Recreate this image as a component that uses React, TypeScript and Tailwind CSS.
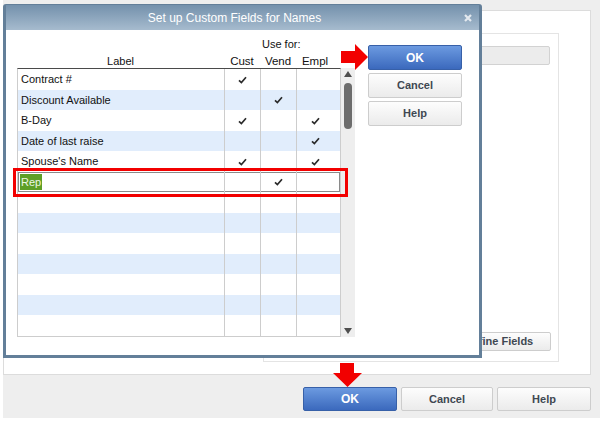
import React from "react";

type Row = { label: string; cust?: boolean; vend?: boolean; empl?: boolean; editing?: boolean };

const rows: Row[] = [
  { label: "Contract #", cust: true },
  { label: "Discount Available", vend: true },
  { label: "B-Day", cust: true, empl: true },
  { label: "Date of last raise", empl: true },
  { label: "Spouse's Name", cust: true, empl: true },
  { label: "Rep", vend: true, editing: true },
  { label: "" },
  { label: "" },
  { label: "" },
  { label: "" },
  { label: "" },
  { label: "" },
  { label: "" },
];

function Check() {
  return (
    <svg width="9" height="8" viewBox="0 0 9 8">
      <path d="M1 4.3 L3.4 6.6 L8 1.3" fill="none" stroke="#2a2a2a" strokeWidth="1.7" />
    </svg>
  );
}

function GrayButton({ label, className }: { label: string; className: string }) {
  return (
    <div
      className={`flex items-center justify-center rounded-[2px] border border-[#cdcdcd] bg-gradient-to-b from-[#fdfdfd] to-[#ebebeb] text-[11px] font-bold text-[#3f4852] ${className}`}
    >
      {label}
    </div>
  );
}

function BlueButton({ className }: { className: string }) {
  return (
    <div
      className={`flex items-center justify-center rounded-[2px] border border-[#3760a8] bg-gradient-to-b from-[#6c9ae0] to-[#3b69bd] text-[12px] font-bold text-white ${className}`}
    >
      OK
    </div>
  );
}

export default function App() {
  return (
    <div className="relative h-[431px] w-[606px] overflow-hidden bg-white font-['Liberation_Sans',Arial,sans-serif] text-[#111]">
      {/* window behind the dialog */}
      <div className="ml-[3px] flex h-[418px] w-[597px] flex-col bg-[#eeeeee] pt-[10px]">
        <div className="h-[365px] w-[588px] border border-[#dcdcdc] bg-white pl-[259px] pt-[22px]">
          <div className="flex h-[329px] w-[296px] flex-col border border-[#e4e4e4] bg-white">
            <div className="ml-auto mr-[8px] mt-[12px] h-[19px] w-[250px] rounded-[2px] border border-[#d2d2d2] bg-[#ececec]" />
            <div className="flex-1" />
            <GrayButton label="Define Fields" className="mb-[10px] ml-auto mr-[7px] h-[19px] w-[104px]" />
          </div>
        </div>
        <div className="flex justify-end gap-[4px] pr-[9px] pt-[12px]">
          <BlueButton className="h-[24px] w-[94px]" />
          <GrayButton label="Cancel" className="h-[24px] w-[92px]" />
          <GrayButton label="Help" className="h-[24px] w-[94px]" />
        </div>
      </div>

      {/* dialog */}
      <div className="absolute left-[3px] top-[4px] flex h-[354px] w-[479px] flex-col rounded-t-[3px] border-[3px] border-t-[1px] border-[#637f99] bg-white">
        <div className="relative flex h-[25px] items-center justify-center bg-gradient-to-b from-[#7491ac] to-[#a6bbce] pr-[16px] text-[12px] text-white">
          Set up Custom Fields for Names
          <svg className="absolute right-[7px] top-[9px]" width="8" height="8" viewBox="0 0 8 8">
            <path d="M1 1 L7 7 M7 1 L1 7" stroke="#e3e9ef" strokeWidth="2.2" />
          </svg>
        </div>
        <div className="flex pl-[11px]">
          <div className="flex w-[338px] flex-col pt-[7px]">
            <div className="ml-[245px] h-[14px] text-[11px] leading-[14px]">Use for:</div>
            <div className="mt-[3px] flex h-[14px] text-[11px] leading-[14px]">
              <div className="w-[207px] text-center">Label</div>
              <div className="w-[36px] text-center text-[11.5px]">Cust</div>
              <div className="w-[36px] text-center text-[11.5px]">Vend</div>
              <div className="w-[38px] text-center text-[11.5px]">Empl</div>
            </div>
            <div className="flex">
              <div className="w-[324px] border-x border-b border-t border-x-[#cdcdcd] border-b-[#cdcdcd] border-t-[#4a4a4a]">
                {rows.map((row, i) => (
                  <div
                    key={i}
                    className={`flex text-[11px] ${i % 2 === 0 ? "h-[21px]" : "h-[20px]"} ${
                      row.editing
                        ? "bg-white shadow-[inset_0_0_0_1px_#8a8a8a]"
                        : i % 2 === 1
                        ? "bg-[#e1edfc]"
                        : "bg-white"
                    }`}
                  >
                    <div className="flex w-[206px] items-center pl-[2px]">
                      {row.editing ? (
                        <span className="bg-[#5e9f27] px-[1px] leading-[16px] text-[#eef6e4]">{row.label}</span>
                      ) : (
                        <span className="pl-[1px]">{row.label}</span>
                      )}
                    </div>
                    <div className="flex w-[36px] items-center justify-center border-l border-[#cdcdcd]">
                      {row.cust && <Check />}
                    </div>
                    <div className="flex w-[36px] items-center justify-center border-l border-[#cdcdcd]">
                      {row.vend && <Check />}
                    </div>
                    <div className="flex flex-1 items-center justify-center border-l border-[#cdcdcd] pr-[7px]">
                      {row.empl && <Check />}
                    </div>
                  </div>
                ))}
              </div>
              <div className="flex w-[14px] flex-col items-center bg-[#eeeeee] pb-[3px] pt-[3px]">
                <svg width="8" height="6" viewBox="0 0 8 6">
                  <path d="M4 0 L8 6 L0 6 Z" fill="#4f4f4f" />
                </svg>
                <div className="mt-[6px] h-[46px] w-[8px] rounded-full bg-[#6d6d6d]" />
                <div className="flex-1" />
                <svg width="8" height="6" viewBox="0 0 8 6">
                  <path d="M0 0 L8 0 L4 6 Z" fill="#4f4f4f" />
                </svg>
              </div>
            </div>
          </div>
          <div className="ml-[13px] mt-[15px] flex w-[94px] flex-col gap-[3px]">
            <BlueButton className="h-[25px]" />
            <GrayButton label="Cancel" className="h-[25px]" />
            <GrayButton label="Help" className="h-[25px]" />
          </div>
        </div>
      </div>

      {/* callouts */}
      <div className="absolute left-[13px] top-[168px] h-[29px] w-[335px] border-[3px] border-[#f20000]" />
      <svg className="absolute left-[341px] top-[44px]" width="27" height="26" viewBox="0 0 27 26">
        <path d="M0 7 L14 7 L14 0 L27 13 L14 26 L14 19 L0 19 Z" fill="#f20000" />
      </svg>
      <svg className="absolute left-[333px] top-[363px]" width="29" height="24" viewBox="0 0 29 24">
        <path d="M7 0 L21 0 L21 10 L29 10 L14.5 24 L0 10 L7 10 Z" fill="#f20000" />
      </svg>
    </div>
  );
}
